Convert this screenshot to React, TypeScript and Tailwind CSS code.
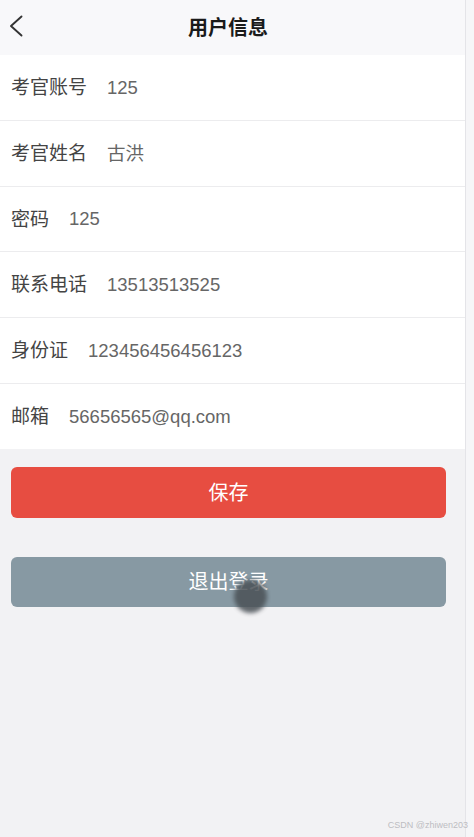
import React from "react";

const rows: { label: string; value: string; h: string }[] = [
  { label: "考官账号", value: "125", h: "h-[66px]" },
  { label: "考官姓名", value: "古洪", h: "h-[66px]" },
  { label: "密码", value: "125", h: "h-[65px]" },
  { label: "联系电话", value: "13513513525", h: "h-[66px]" },
  { label: "身份证", value: "123456456456123", h: "h-[66px]" },
  { label: "邮箱", value: "56656565@qq.com", h: "h-[65px]" },
];

export default function App() {
  return (
    <div
      className="relative flex h-[837px] w-[474px] overflow-hidden bg-[#f2f2f4]"
      style={{ fontFamily: '"Liberation Sans", "Noto Sans CJK SC", sans-serif' }}
    >
      <div className="flex w-[465px] flex-col">
        {/* top bar */}
        <div className="relative flex h-[55px] items-center justify-center bg-[#f8f8fa] pr-[9px]">
          <button className="absolute left-[9px] top-[15px] flex h-[22px] w-[14px] items-center">
            <svg width="14" height="22" viewBox="0 0 14 22" fill="none">
              <path d="M12.5 1.5 L2 11 L12.5 20.5" stroke="#333" strokeWidth="1.9" strokeLinecap="round" strokeLinejoin="round" />
            </svg>
          </button>
          <h1 className="text-[20px] font-bold text-[#1a1a1a]">用户信息</h1>
        </div>

        {/* profile fields */}
        <div className="flex flex-col bg-white">
          {rows.map((r, i) => (
            <div
              key={r.label}
              className={`flex items-center gap-[20px] pl-[11px] ${r.h} ${i < rows.length - 1 ? "border-b border-[#ececee]" : ""}`}
            >
              <span className="translate-y-[1px] text-[19px] text-[#444]">{r.label}</span>
              <span className="text-[18.5px] text-[#666]">{r.value}</span>
            </div>
          ))}
        </div>

        {/* actions */}
        <div className="flex flex-col gap-[39px] pl-[11px] pr-[19px] pt-[18px]">
          <button className="h-[51px] rounded-[6px] bg-[#e74d41] text-[20px] text-white">保存</button>
          <button className="h-[50px] rounded-[6px] bg-[#8799a3] text-[20px] text-white">退出登录</button>
        </div>
      </div>

      {/* side rail */}
      <div className="w-[9px] border-l border-[#e4e4e8] bg-[#f6f6f8]" />

      {/* touch indicator */}
      <div className="pointer-events-none absolute left-[234px] top-[580px] h-[33px] w-[33px] rounded-full bg-[#4a5156] opacity-85 blur-[2px]" />

      <span className="absolute bottom-[5px] right-[6px] text-[9px] text-[#bdbdc2]">CSDN @zhiwen203</span>
    </div>
  );
}
